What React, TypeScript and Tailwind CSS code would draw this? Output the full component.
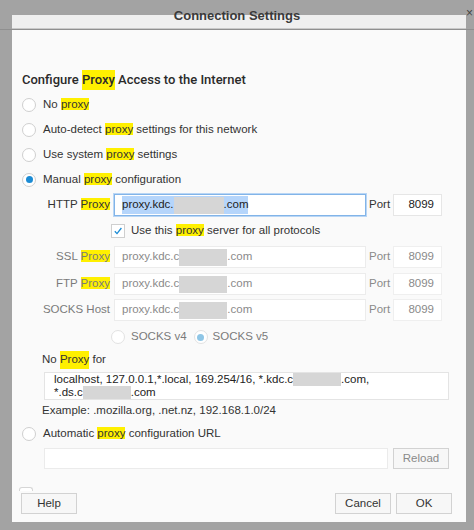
import React from "react"

const Hl = ({ children }: { children: React.ReactNode }) => (
  <span className="bg-[#fff000]">{children}</span>
)

const Radio = ({ checked = false, disabled = false }: { checked?: boolean; disabled?: boolean }) => (
  <span
    className={`flex h-[14px] w-[14px] shrink-0 items-center justify-center rounded-full border bg-white ${
      disabled ? "border-[#e2e2e2]" : "border-[#cfcfcf]"
    }`}
  >
    {checked && (
      <span className={`h-[7px] w-[7px] rounded-full ${disabled ? "bg-[#8fc6e6]" : "bg-[#1b8bd4]"}`} />
    )}
  </span>
)

const Redact = ({ w, h = 17 }: { w: number; h?: number }) => (
  <span className="inline-block bg-[#d6d6d6] align-middle" style={{ width: w, height: h }} />
)

const RadioRow = ({ checked, children }: { checked?: boolean; children: React.ReactNode }) => (
  <div className="flex h-[25px] items-center gap-[7px]">
    <Radio checked={checked} />
    <span>{children}</span>
  </div>
)

const ProxyRow = ({
  label,
  active = false,
}: {
  label: React.ReactNode
  active?: boolean
}) => (
  <div className="flex h-[22px] items-center">
    <div className={`w-[89px] pr-[1px] text-right ${active ? "text-[#333]" : "text-[#7a7a7a]"}`}>{label}</div>
    <div
      className={`ml-[3px] flex h-[22px] w-[252px] items-center bg-white pl-[7px] ${
        active ? "border border-[#82b4e8] shadow-[0_0_0_1px_#b9d6f5]" : "border border-[#ececec] text-[#8a8a8a]"
      }`}
    >
      {active ? (
        <span className="flex items-center bg-[#b5d5fb] text-[#222]">
          proxy.kdc.<Redact w={50} />.com
        </span>
      ) : (
        <span className="flex items-center">
          proxy.kdc.c<Redact w={48} />.com
        </span>
      )}
    </div>
    <span className={`ml-[3px] w-[24px] ${active ? "text-[#333]" : "text-[#8a8a8a]"}`}>Port</span>
    <div
      className={`flex h-[22px] w-[49px] items-center justify-end bg-white pr-[7px] border ${
        active ? "border-[#e6e6e6] text-[#222]" : "border-[#efefef] text-[#8a8a8a]"
      }`}
    >
      8099
    </div>
  </div>
)

const Button = ({ children, disabled = false }: { children: React.ReactNode; disabled?: boolean }) => (
  <div
    className={`flex h-[21px] w-[56px] items-center justify-center border border-[#d2d2d2] bg-[#f7f7f7] ${
      disabled ? "text-[#8a8a8a]" : "text-[#333]"
    }`}
  >
    {children}
  </div>
)

export default function App() {
  return (
    <div
      className="relative h-[530px] w-[474px] overflow-hidden bg-[#a3a3a3] text-[11.5px] text-[#333]"
      style={{ fontFamily: '"Liberation Sans", Arial, sans-serif' }}
    >
      <div className="absolute left-0 right-0 top-[29px] h-px bg-[#8f8f8f]" />
      <div className="absolute left-0 right-0 top-[6px] text-center text-[13px] font-bold text-[#3a3a3a]">
        Connection Settings
      </div>
      <div className="absolute right-[1px] top-[6px] text-[12px] leading-[14px] text-[#444]">×</div>

      <div className="ml-[12px] mt-[15px] flex h-[507px] w-[454px] flex-col bg-[#fafafa]">
        <div className="h-[14px] border-b border-[#c9c9c9] bg-[#efefef]" />

        <div className="relative flex flex-col pl-[10px] pr-[17px]">
          <div
            className="mt-[41px] flex h-[20px] items-center text-[13px] font-medium text-[#2a2a2a]"
            style={{ fontFamily: "Roboto, 'Liberation Sans', sans-serif" }}
          >
            Configure&nbsp;<Hl>Proxy</Hl>&nbsp;Access to the Internet
          </div>

          <div className="mt-[2px] flex flex-col">
            <RadioRow>
              No <Hl>proxy</Hl>
            </RadioRow>
            <RadioRow>
              Auto-detect <Hl>proxy</Hl> settings for this network
            </RadioRow>
            <RadioRow>
              Use system <Hl>proxy</Hl> settings
            </RadioRow>
            <RadioRow checked>
              Manual <Hl>proxy</Hl> configuration
            </RadioRow>
          </div>

          <div className="mt-[2px]">
            <ProxyRow
              active
              label={
                <>
                  HTTP <Hl>Proxy</Hl>
                </>
              }
            />
          </div>

          <div className="flex h-[30px] items-center pl-[89px] gap-[6px]">
            <span className="flex h-[14px] w-[14px] items-center justify-center border border-[#cfcfcf] bg-white">
              <svg width="10" height="10" viewBox="0 0 10 10" fill="none">
                <path d="M1.8 5.2 L4 7.6 L8.4 2" stroke="#1b8bd4" strokeWidth="1.3" />
              </svg>
            </span>
            <span>
              Use this <Hl>proxy</Hl> server for all protocols
            </span>
          </div>

          <ProxyRow
            label={
              <>
                SSL <Hl>Proxy</Hl>
              </>
            }
          />
          <div className="mt-[5px]">
            <ProxyRow
              label={
                <>
                  FTP <Hl>Proxy</Hl>
                </>
              }
            />
          </div>
          <div className="mt-[4px]">
            <ProxyRow label="SOCKS Host" />
          </div>

          <div className="mt-[4px] flex h-[24px] items-center pl-[89px] text-[#7a7a7a]">
            <Radio disabled />
            <span className="ml-[6px]">SOCKS v4</span>
            <span className="ml-[7px]">
              <Radio checked disabled />
            </span>
            <span className="ml-[5px]">SOCKS v5</span>
          </div>

          <div className="mt-[1px] flex h-[20px] items-center pl-[20px]">
            No&nbsp;<Hl>Proxy</Hl>&nbsp;for
          </div>

          <div className="ml-[22px] mt-[2px] flex h-[28px] w-[405px] flex-col justify-center border border-[#e4e4e4] bg-white pl-[9px] leading-[13px] text-[#222]">
            <div className="flex h-[13px] items-center">
              localhost, 127.0.0.1,*.local, 169.254/16, *.kdc.c<Redact w={48} h={13} />.com,
            </div>
            <div className="flex h-[13px] items-center">
              *.ds.c<Redact w={48} h={13} />.com
            </div>
          </div>

          <div className="mt-[2px] flex h-[18px] items-center pl-[20px]">
            Example: .mozilla.org, .net.nz, 192.168.1.0/24
          </div>

          <div className="mt-[2px] flex h-[24px] items-center gap-[7px]">
            <Radio />
            <span>
              Automatic <Hl>proxy</Hl> configuration URL
            </span>
          </div>

          <div className="mt-[2px] flex items-center pl-[22px]">
            <div className="h-[21px] w-[344px] border border-[#ebebeb] bg-white" />
            <div className="ml-[5px]">
              <Button disabled>Reload</Button>
            </div>
          </div>

          <div className="absolute bottom-[-22px] left-[7px] h-[4px] w-[14px] rounded-t-[3px] border border-b-0 border-[#d6d6d6] bg-white" />
        </div>

        <div className="mt-[24px] flex items-center px-[9px]">
          <Button>Help</Button>
          <div className="ml-auto flex gap-[5px] pr-[5px]">
            <Button>Cancel</Button>
            <Button>OK</Button>
          </div>
        </div>
      </div>
    </div>
  )
}
